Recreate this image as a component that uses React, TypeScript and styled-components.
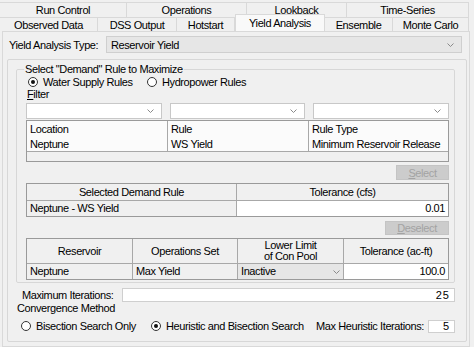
import React from "react";
import styled, { createGlobalStyle } from "styled-components";

const Global = createGlobalStyle`
  html, body { margin: 0; padding: 0; background: #f0f0f0; }
  body {
    font-family: "Liberation Sans", Arial, sans-serif;
    font-size: 11px;
    letter-spacing: -0.4px;
    color: #000;
  }
  #root { width: 474px; height: 347px; overflow: hidden; }
  * { box-sizing: border-box; }
`;

const Window = styled.div`
  width: 474px;
  height: 347px;
  display: flex;
  flex-direction: column;
  background: #f0f0f0;
`;

const TabRow = styled.div<{ $h: number; $top?: number }>`
  display: flex;
  height: ${(p) => p.$h}px;
  margin-top: ${(p) => p.$top ?? 0}px;
  align-items: flex-end;
`;

const Tab = styled.div<{ $w: number; $sel?: boolean }>`
  width: ${(p) => p.$w}px;
  height: ${(p) => (p.$sel ? "calc(100% + 3px)" : "100%")};
  margin-top: ${(p) => (p.$sel ? -3 : 0)}px;
  display: flex;
  align-items: center;
  justify-content: center;
  border-top: 1px solid #d9d9d9;
  border-right: 1px solid #d9d9d9;
  border-left: ${(p) => (p.$sel ? "1px solid #d9d9d9" : "none")};
  background: ${(p) => (p.$sel ? "#f9f9f9" : "#f0f0f0")};
  position: relative;
  z-index: ${(p) => (p.$sel ? 2 : 1)};
  white-space: nowrap;
`;

const Panel = styled.div`
  margin-left: 2px;
  width: 468px;
  height: 316px;
  border: 1px solid #d9d9d9;
  background: #f0f0f0;
  display: flex;
  flex-direction: column;
`;

const TypeRow = styled.div`
  display: flex;
  align-items: center;
  margin: 4px 0 0 6px;
  height: 17px;
`;

const FieldLabel = styled.span<{ $w?: number }>`
  width: ${(p) => (p.$w ? `${p.$w}px` : "auto")};
  flex: none;
  white-space: nowrap;
`;

const Combo = styled.div<{ $w: number; $h: number; $bg?: string }>`
  width: ${(p) => p.$w}px;
  height: ${(p) => p.$h}px;
  border: 1px solid ${(p) => (p.$bg ? "#cfcfcf" : "#c8c8c8")};
  background: ${(p) => p.$bg ?? "#fff"};
  display: flex;
  align-items: center;
  justify-content: space-between;
  padding: 0 7px 0 4px;
  flex: none;
`;

const OuterGroup = styled.div`
  margin: 6px 0 0 4px;
  width: 460px;
  height: 283px;
  border: 1px solid #d7d7d7;
  border-radius: 2px;
  display: flex;
  flex-direction: column;
`;

const InnerGroup = styled.fieldset`
  margin: 3px 0 0 8px;
  padding: 0 5px 0 9px;
  width: 439px;
  height: 220px;
  border: 1px solid #d7d7d7;
  border-radius: 2px;
  min-inline-size: 0;
  display: flex;
  flex-direction: column;
`;

const Legend = styled.legend`
  padding: 0 1px;
  margin-left: -2px;
  line-height: 13px;
  font-size: 11px;
`;

const RadioRow = styled.div<{ $h: number; $ml: number; $mt?: number }>`
  display: flex;
  align-items: center;
  height: ${(p) => p.$h}px;
  margin-left: ${(p) => p.$ml}px;
  margin-top: ${(p) => p.$mt ?? 0}px;
`;

const RadioOption = styled.div<{ $w?: number }>`
  display: flex;
  align-items: center;
  width: ${(p) => (p.$w ? `${p.$w}px` : "auto")};
  flex: none;
  white-space: nowrap;
`;

const RadioCircle = styled.span<{ $on?: boolean }>`
  width: 10px;
  height: 10px;
  border-radius: 50%;
  border: 1px solid #333;
  background: #fff;
  margin-right: 5px;
  display: flex;
  align-items: center;
  justify-content: center;
  flex: none;
  &::after {
    content: "";
    width: 4px;
    height: 4px;
    border-radius: 50%;
    background: ${(p) => (p.$on ? "#111" : "transparent")};
  }
`;

const SmallLabel = styled.div<{ $h: number; $ml: number; $mt?: number }>`
  height: ${(p) => p.$h}px;
  line-height: ${(p) => p.$h}px;
  margin-left: ${(p) => p.$ml}px;
  margin-top: ${(p) => p.$mt ?? 0}px;
  white-space: nowrap;
`;

const Mn = styled.span`
  text-decoration: underline;
`;

const FilterRow = styled.div`
  display: flex;
  gap: 8px;
  margin-top: 2px;
  height: 16px;
`;

const Table = styled.div<{ $h: number; $mt: number }>`
  width: 423px;
  height: ${(p) => p.$h}px;
  margin-top: ${(p) => p.$mt}px;
  border: 1px solid #9a9a9a;
  background: #f0f0f0;
  display: flex;
  flex-direction: column;
  flex: none;
`;

const GridRow = styled.div<{ $cols: string; $h: number; $line?: boolean }>`
  display: grid;
  grid-template-columns: ${(p) => p.$cols};
  height: ${(p) => p.$h}px;
  border-bottom: ${(p) => (p.$line ? "1px solid #a8a8a8" : "none")};
  flex: none;
`;

const Cell = styled.div<{ $align?: "left" | "center" | "right"; $bg?: string; $last?: boolean }>`
  display: flex;
  align-items: center;
  justify-content: ${(p) =>
    p.$align === "center" ? "center" : p.$align === "right" ? "flex-end" : "space-between"};
  text-align: center;
  padding: 0 3px 0 3px;
  background: ${(p) => p.$bg ?? "#fbfbfb"};
  border-right: ${(p) => (p.$last ? "none" : "1px solid #a8a8a8")};
  line-height: 11px;
  white-space: nowrap;
  overflow: hidden;
`;

const ButtonRow = styled.div<{ $mt: number }>`
  display: flex;
  justify-content: flex-end;
  margin-top: ${(p) => p.$mt}px;
`;

const DisabledButton = styled.div<{ $w: number; $h: number }>`
  width: ${(p) => p.$w}px;
  height: ${(p) => p.$h}px;
  background: #cccccc;
  border: 1px solid #c4c4c4;
  color: #a3a3a3;
  display: flex;
  align-items: center;
  justify-content: center;
`;

const InputRow = styled.div<{ $mt: number; $ml: number; $h: number }>`
  display: flex;
  align-items: center;
  margin-top: ${(p) => p.$mt}px;
  margin-left: ${(p) => p.$ml}px;
  height: ${(p) => p.$h}px;
`;

const TextField = styled.div<{ $w: number; $h: number }>`
  width: ${(p) => p.$w}px;
  height: ${(p) => p.$h}px;
  background: #fff;
  border: 1px solid #cfcfcf;
  display: flex;
  align-items: center;
  justify-content: flex-end;
  padding-right: 4px;
  letter-spacing: 1px;
  flex: none;
`;

const Chevron = () => (
  <svg width="7" height="4" viewBox="0 0 7 4">
    <polyline points="0.5,0.5 3.5,3.5 6.5,0.5" fill="none" stroke="#8a8a8a" strokeWidth="1" />
  </svg>
);

const TopRow1 = [
  { t: "Run Control", w: 127 },
  { t: "Operations", w: 120 },
  { t: "Lookback", w: 100 },
  { t: "Time-Series", w: 122 },
];
const TopRow2 = [
  { t: "Observed Data", w: 98 },
  { t: "DSS Output", w: 79 },
  { t: "Hotstart", w: 58 },
  { t: "Yield Analysis", w: 90, sel: true },
  { t: "Ensemble", w: 68 },
  { t: "Monte Carlo", w: 76 },
];

export default function App() {
  return (
    <Window>
      <Global />
      <TabRow $h={15} $top={2}>
        {TopRow1.map((t) => (
          <Tab key={t.t} $w={t.w}>
            {t.t}
          </Tab>
        ))}
      </TabRow>
      <TabRow $h={14}>
        {TopRow2.map((t) => (
          <Tab key={t.t} $w={t.w} $sel={t.sel}>
            {t.t}
          </Tab>
        ))}
      </TabRow>
      <Panel>
        <TypeRow>
          <FieldLabel $w={97}>Yield Analysis Type:</FieldLabel>
          <Combo $w={356} $h={17} $bg="#e6e6e6">
            <span>Reservoir Yield</span>
            <Chevron />
          </Combo>
        </TypeRow>
        <OuterGroup>
          <InnerGroup>
            <Legend>Select "Demand" Rule to Maximize</Legend>
            <RadioRow $h={12} $ml={2}>
              <RadioOption $w={119}>
                <RadioCircle $on />
                Water Supply Rules
              </RadioOption>
              <RadioOption>
                <RadioCircle />
                Hydropower Rules
              </RadioOption>
            </RadioRow>
            <SmallLabel $h={13} $ml={1}>
              <Mn>F</Mn>ilter
            </SmallLabel>
            <FilterRow>
              <Combo $w={136} $h={16}>
                <span />
                <Chevron />
              </Combo>
              <Combo $w={135} $h={16}>
                <span />
                <Chevron />
              </Combo>
              <Combo $w={136} $h={16}>
                <span />
                <Chevron />
              </Combo>
            </FilterRow>
            <Table $h={42} $mt={1}>
              <GridRow $cols="141px 141px 1fr" $h={16}>
                <Cell>Location</Cell>
                <Cell>Rule</Cell>
                <Cell $last>Rule Type</Cell>
              </GridRow>
              <GridRow $cols="141px 141px 1fr" $h={15} $line>
                <Cell>Neptune</Cell>
                <Cell>WS Yield</Cell>
                <Cell $last>Minimum Reservoir Release</Cell>
              </GridRow>
            </Table>
            <ButtonRow $mt={3}>
              <DisabledButton $w={53} $h={15}>
                <span>
                  <Mn>S</Mn>elect
                </span>
              </DisabledButton>
            </ButtonRow>
            <Table $h={34} $mt={3}>
              <GridRow $cols="210px 1fr" $h={17} $line>
                <Cell $align="center" $bg="#f0f0f0">
                  Selected Demand Rule
                </Cell>
                <Cell $align="center" $bg="#f0f0f0" $last>
                  Tolerance (cfs)
                </Cell>
              </GridRow>
              <GridRow $cols="210px 1fr" $h={15}>
                <Cell $bg="#f0f0f0">Neptune - WS Yield</Cell>
                <Cell $align="right" $bg="#ffffff" $last>
                  0.01
                </Cell>
              </GridRow>
            </Table>
            <ButtonRow $mt={4}>
              <DisabledButton $w={64} $h={14}>
                <span>
                  <Mn>D</Mn>eselect
                </span>
              </DisabledButton>
            </ButtonRow>
            <Table $h={42} $mt={3}>
              <GridRow $cols="106px 105px 106px 1fr" $h={25} $line>
                <Cell $align="center" $bg="#f0f0f0">
                  Reservoir
                </Cell>
                <Cell $align="center" $bg="#f0f0f0">
                  Operations Set
                </Cell>
                <Cell $align="center" $bg="#f0f0f0">
                  Lower Limit
                  <br />
                  of Con Pool
                </Cell>
                <Cell $align="center" $bg="#f0f0f0" $last>
                  Tolerance (ac-ft)
                </Cell>
              </GridRow>
              <GridRow $cols="106px 105px 106px 1fr" $h={15}>
                <Cell $bg="#f0f0f0">Neptune</Cell>
                <Cell $bg="#f0f0f0">Max Yield</Cell>
                <Cell $bg="#e6e6e6">
                  <span>Inactive</span>
                  <Chevron />
                </Cell>
                <Cell $align="right" $bg="#ffffff" $last>
                  100.0
                </Cell>
              </GridRow>
            </Table>
          </InnerGroup>
          <InputRow $mt={5} $ml={14} $h={14}>
            <FieldLabel $w={100}>Maximum Iterations:</FieldLabel>
            <TextField $w={333} $h={14}>
              25
            </TextField>
          </InputRow>
          <SmallLabel $h={13} $ml={9}>
            Convergence Method
          </SmallLabel>
          <RadioRow $h={14} $ml={13} $mt={4}>
            <RadioOption $w={130}>
              <RadioCircle />
              Bisection Search Only
            </RadioOption>
            <RadioOption $w={165}>
              <RadioCircle $on />
              Heuristic and Bisection Search
            </RadioOption>
            <FieldLabel $w={112}>Max Heuristic Iterations:</FieldLabel>
            <TextField $w={27} $h={13}>
              5
            </TextField>
          </RadioRow>
        </OuterGroup>
      </Panel>
    </Window>
  );
}
